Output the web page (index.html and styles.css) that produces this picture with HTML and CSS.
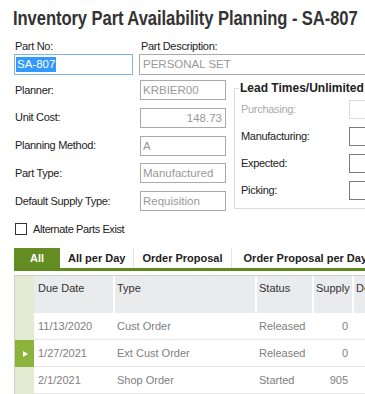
FILE: index.html
```html
<!DOCTYPE html>
<html>
<head>
<meta charset="utf-8">
<link rel="stylesheet" href="styles.css">
</head>
<body>
<div class="page">
  <h1 class="title"><span class="title-text">Inventory Part Availability Planning - SA-807</span></h1>

  <div class="part-row">
    <div class="field part-no">
      <div class="lbl">Part No:</div>
      <div class="box box-focus"><span class="sel">SA-807</span></div>
    </div>
    <div class="field part-desc">
      <div class="lbl">Part Description:</div>
      <div class="box box-wide">PERSONAL SET</div>
    </div>
  </div>

  <div class="mid">
    <div class="form">
      <div class="lbl">Planner:</div><div class="box">KRBIER00</div>
      <div class="lbl">Unit Cost:</div><div class="box num">148.73</div>
      <div class="lbl">Planning Method:</div><div class="box">A</div>
      <div class="lbl">Part Type:</div><div class="box">Manufactured</div>
      <div class="lbl">Default Supply Type:</div><div class="box">Requisition</div>
    </div>
    <fieldset class="lead">
      <legend>Lead Times/Unlimited</legend>
      <div class="lead-grid">
        <div class="lead-lbl disabled">Purchasing:</div><div class="lead-box disabled"></div>
        <div class="lead-lbl">Manufacturing:</div><div class="lead-box"></div>
        <div class="lead-lbl">Expected:</div><div class="lead-box"></div>
        <div class="lead-lbl">Picking:</div><div class="lead-box"></div>
      </div>
    </fieldset>
  </div>

  <div class="check-row">
    <span class="check"></span>
    <span class="check-lbl">Alternate Parts Exist</span>
  </div>

  <div class="tabs">
    <div class="tab active">All</div>
    <div class="tab">All per Day</div>
    <div class="tab">Order Proposal</div>
    <div class="tab tab-last">Order Proposal per Day</div>
  </div>

  <div class="grid">
    <div class="hcell ind"></div>
    <div class="hcell">Due Date</div>
    <div class="hcell div">Type</div>
    <div class="hcell div">Status</div>
    <div class="hcell div">Supply</div>
    <div class="hcell div">Demand</div>

    <div class="ind"></div>
    <div class="cell">11/13/2020</div>
    <div class="cell">Cust Order</div>
    <div class="cell">Released</div>
    <div class="cell r">0</div>
    <div class="cell"></div>

    <div class="ind on"><span class="tri"></span></div>
    <div class="cell">1/27/2021</div>
    <div class="cell">Ext Cust Order</div>
    <div class="cell">Released</div>
    <div class="cell r">0</div>
    <div class="cell"></div>

    <div class="ind"></div>
    <div class="cell">2/1/2021</div>
    <div class="cell">Shop Order</div>
    <div class="cell">Started</div>
    <div class="cell r">905</div>
    <div class="cell"></div>
  </div>
</div>
</body>
</html>
```
FILE: styles.css
```css
html, body {
  margin: 0;
  padding: 0;
  background: #fff;
  overflow: hidden;
}
body {
  width: 365px;
  height: 394px;
  font-family: "Liberation Sans", Arial, sans-serif;
  font-size: 11px;
  color: #222;
}
.page {
  width: 365px;
  height: 394px;
  overflow: hidden;
  padding-left: 14px;
  box-sizing: border-box;
}
.title {
  margin: 0 0 0 -1px;
  padding-top: 6px;
  font-family: "Liberation Sans", Arial, sans-serif;
  font-weight: bold;
  font-size: 20px;
  line-height: 24px;
  height: 24px;
  color: #333;
  white-space: nowrap;
}
.title-text {
  display: inline-block;
  transform: scaleX(0.83);
  transform-origin: 0 50%;
  letter-spacing: -0.1px;
}
.part-row {
  display: flex;
  margin-top: 10px;
  gap: 6px;
  width: 400px;
}
.lbl {
  line-height: 13px;
  letter-spacing: -0.3px;
  padding-left: 1px;
  white-space: nowrap;
}
.field .lbl { margin-bottom: 1px; }
.part-desc .lbl { padding-left: 2px; }
.part-no { width: 119px; flex: none; }
.part-desc { width: 240px; flex: none; }
.box {
  box-sizing: border-box;
  height: 20px;
  border: 1px solid #a9a9a9;
  padding: 0 3px 0 2px;
  color: #999;
  font-size: 11.5px;
  line-height: 18px;
  white-space: nowrap;
  overflow: hidden;
}
.field .box { height: 21px; line-height: 19px; }
.box-focus {
  border-color: #7eb4ea;
  padding: 0 1px;
  display: flex;
  align-items: center;
}
.sel {
  background: #3399ff;
  color: #fff;
  line-height: 15px;
  padding: 0 1px;
}
.box-wide { padding-left: 3px; }
.num { text-align: right; }

.mid {
  display: flex;
  margin-top: 5px;
  align-items: flex-start;
}
.form {
  display: grid;
  grid-template-columns: 126px 86px;
  row-gap: 7.75px;
  align-items: center;
  flex: none;
}
.lead {
  flex: none;
  width: 160px;
  margin: 2px 0 0 8px;
  padding: 5px 0 8px 6px;
  border: 1px solid #dcdcdc;
  box-sizing: border-box;
  min-width: 0;
}
.lead legend {
  font-weight: bold;
  font-size: 12px;
  line-height: 13px;
  padding: 0 1px;
  margin-left: -2px;
  color: #222;
  white-space: nowrap;
}
.lead-grid {
  display: grid;
  grid-template-columns: 108px 40px;
  row-gap: 8px;
  align-items: center;
}
.lead-lbl {
  letter-spacing: -0.3px;
  line-height: 13px;
}
.lead-lbl.disabled { color: #aaa; }
.lead-box {
  height: 19px;
  box-sizing: border-box;
  border: 1px solid #7a7a7a;
}
.lead-box.disabled { border-color: #dcdcdc; }

.check-row {
  display: flex;
  align-items: center;
  margin-top: 12px;
  padding-left: 1px;
  height: 12px;
}
.check {
  width: 12px;
  height: 12px;
  box-sizing: border-box;
  border: 1px solid #333;
  flex: none;
}
.check-lbl {
  margin-left: 6px;
  font-size: 11px;
  letter-spacing: -0.4px;
}

.tabs {
  display: flex;
  margin-top: 13px;
  height: 20px;
  border-bottom: 3px solid #5f8a1e;
  white-space: nowrap;
}
.tab {
  flex: none;
  font-weight: bold;
  font-size: 11px;
  line-height: 20px;
  padding: 0 8px;
  color: #222;
  border-left: 1px solid #e4e4e4;
}
.tab-last { padding-left: 12px; }
.tab.active {
  background: #638d20;
  color: #fff;
  width: 46px;
  box-sizing: border-box;
  text-align: center;
  border-left: none;
  padding: 0;
}
.tab.active + .tab { border-left: none; }

.grid {
  margin-top: 4px;
  display: grid;
  grid-template-columns: 19px 79px 142px 57px 40px 60px;
  grid-template-rows: 37px 27px 27px 27px;
  border-left: 1px solid #cfcfcf;
  border-top: 1px solid #cfcfcf;
  width: 397px;
}
.hcell {
  background: #e9ebec;
  color: #333;
  padding: 6px 0 0 4px;
  line-height: 13px;
  white-space: nowrap;
  overflow: hidden;
  box-sizing: border-box;
}
.hcell.ind { padding: 0; }
.hcell.div {
  border-left: 2px solid #fff;
  padding-left: 2px;
}
.ind {
  background: #e3ebd3;
  display: flex;
  align-items: center;
  justify-content: center;
}
.ind.on { background: #8cb43c; }
.tri {
  width: 0;
  height: 0;
  border-left: 5px solid #fff;
  border-top: 3px solid transparent;
  border-bottom: 3px solid transparent;
  margin-left: 1px;
}
.cell {
  color: #808080;
  border-bottom: 1px solid #e6e6e6;
  display: flex;
  align-items: center;
  padding-left: 4px;
  box-sizing: border-box;
  white-space: nowrap;
}
.cell.r {
  justify-content: flex-end;
  padding: 0 4px 0 0;
}
```
